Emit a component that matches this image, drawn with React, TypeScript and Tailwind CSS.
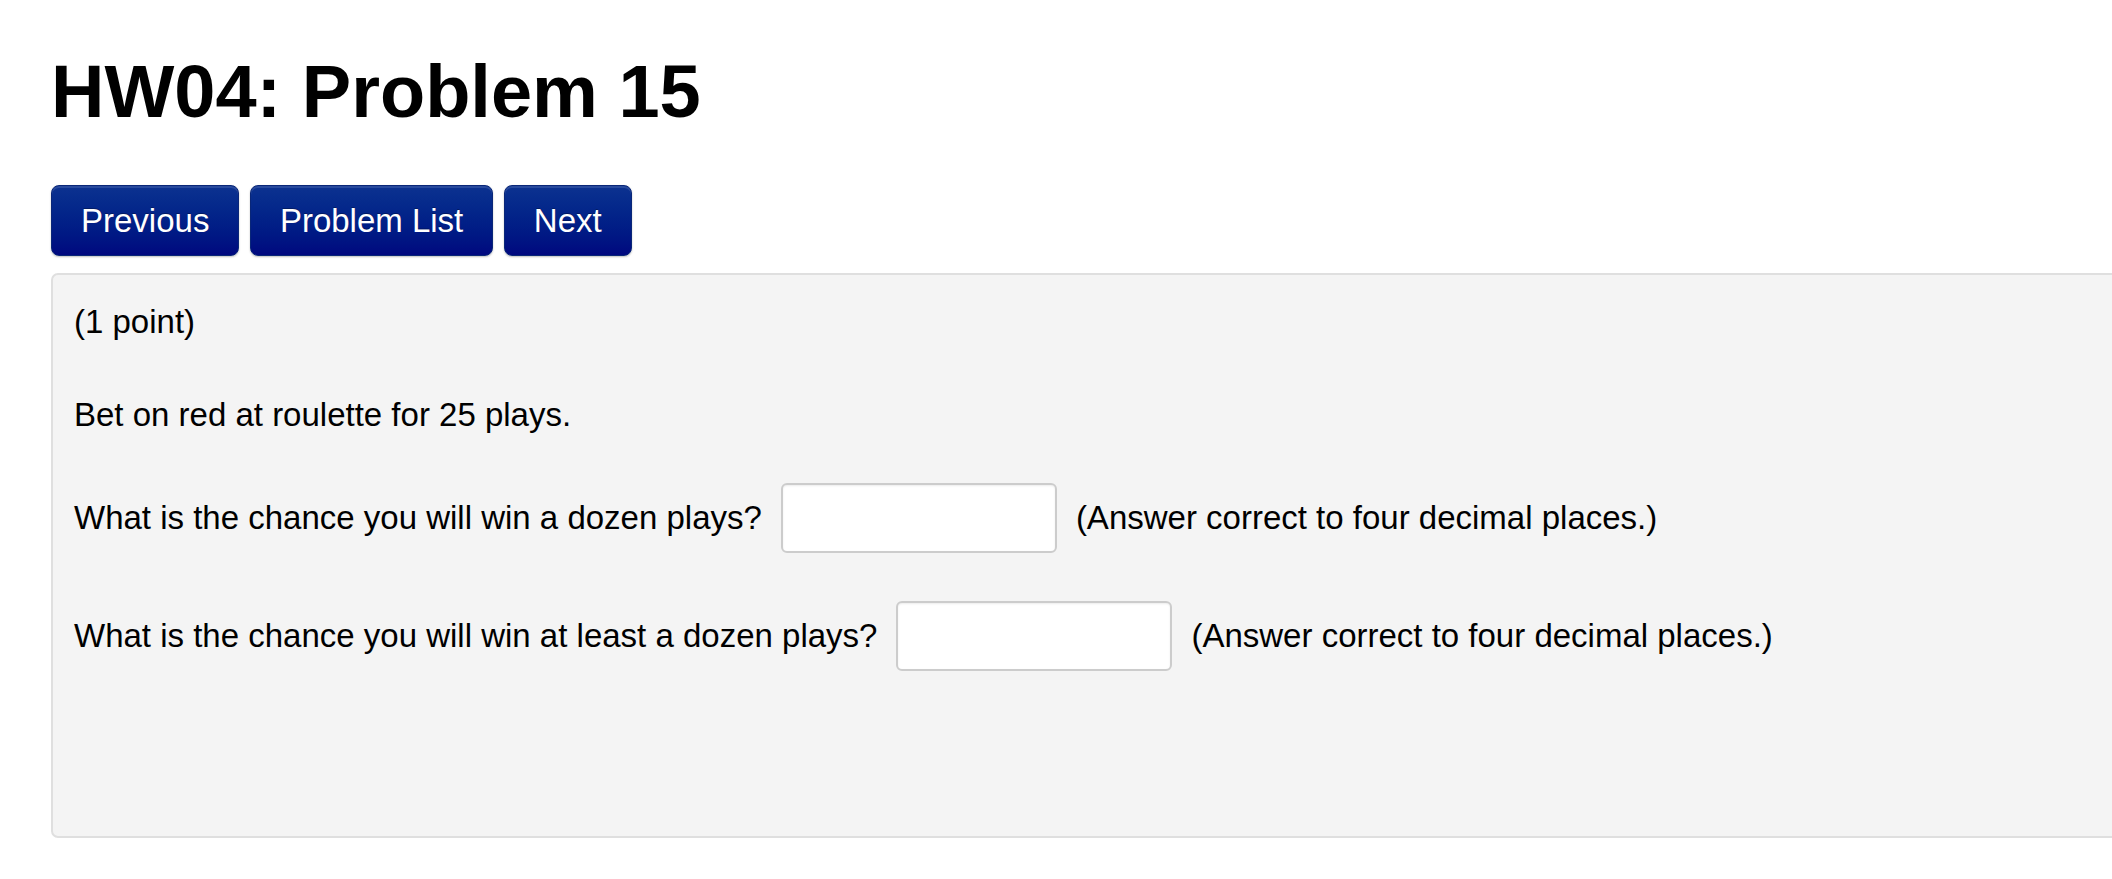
import React from "react";

const font = { fontFamily: '"Liberation Sans", Arial, sans-serif' };

function NavButton({ label }: { label: string }) {
    return (
        <button
            className="h-[71px] px-[29px] flex items-center rounded-[8px] border border-[#0a2778] bg-linear-to-b from-[#0c3290] to-[#00077f] text-white text-[33px] leading-[38px] shadow-[inset_0_2px_0_rgba(255,255,255,0.12),0_1px_2px_rgba(0,0,0,0.25)] [text-shadow:0_-1px_0_rgba(0,0,0,0.3)]"
        >
            {label}
        </button>
    );
}

function AnswerBox() {
    return (
        <input
            type="text"
            className="ml-[19px] mr-[19px] w-[276px] h-[70px] bg-white border-2 border-[#cccccc] rounded-[6px] shadow-[inset_0_1px_2px_rgba(0,0,0,0.08)] outline-none"
        />
    );
}

export default function App() {
    return (
        <div className="min-h-[879px] bg-white overflow-hidden text-black" style={font}>
            <div className="pl-[51px] pt-[52px]">
                <h1 className="text-[74px] leading-[80px] font-bold">HW04: Problem 15</h1>

                <div className="mt-[53px] flex gap-[10.5px]">
                    <NavButton label="Previous" />
                    <NavButton label="Problem List" />
                    <NavButton label="Next" />
                </div>

                {/* Problem body */}
                <div className="mt-[17px] w-[2200px] h-[565px] border-2 border-[#dfdfdf] rounded-[7px] bg-[#f4f4f4] pt-[28px] pl-[21px] text-[33px] leading-[38px]">
                    <p>(1 point)</p>
                    <p className="mt-[55px]">Bet on red at roulette for 25 plays.</p>
                    <div className="mt-[49px] flex items-center h-[70px]">
                        <span>What is the chance you will win a dozen plays?</span>
                        <AnswerBox />
                        <span>(Answer correct to four decimal places.)</span>
                    </div>
                    <div className="mt-[48px] flex items-center h-[70px]">
                        <span>What is the chance you will win at least a dozen plays?</span>
                        <AnswerBox />
                        <span>(Answer correct to four decimal places.)</span>
                    </div>
                </div>
            </div>
        </div>
    );
}
